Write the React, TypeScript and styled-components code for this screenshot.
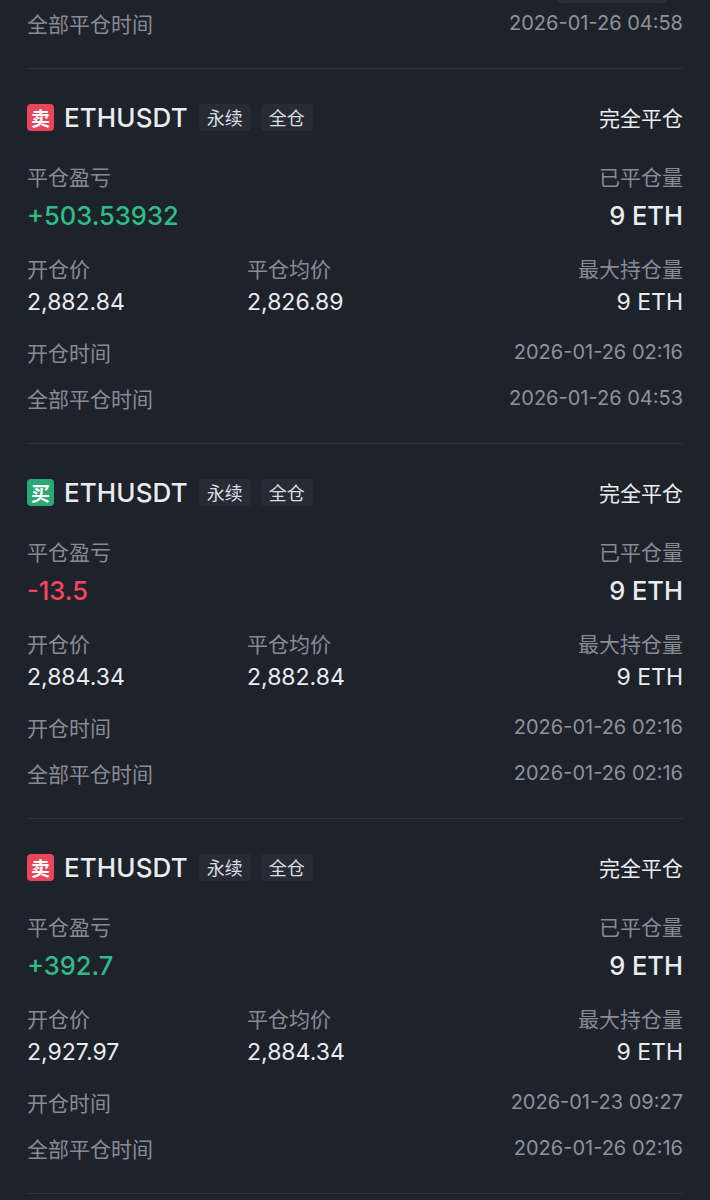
import styled, { createGlobalStyle } from "styled-components";

type Side = "buy" | "sell";

interface Position {
  side: Side;
  symbol: string;
  pnl: string;
  closedQty: string;
  openPrice: string;
  closePrice: string;
  maxQty: string;
  openTime: string;
  closeTime: string;
}

const POSITIONS: Position[] = [
  {
    side: "sell",
    symbol: "ETHUSDT",
    pnl: "+503.53932",
    closedQty: "9 ETH",
    openPrice: "2,882.84",
    closePrice: "2,826.89",
    maxQty: "9 ETH",
    openTime: "2026-01-26 02:16",
    closeTime: "2026-01-26 04:53",
  },
  {
    side: "buy",
    symbol: "ETHUSDT",
    pnl: "-13.5",
    closedQty: "9 ETH",
    openPrice: "2,884.34",
    closePrice: "2,882.84",
    maxQty: "9 ETH",
    openTime: "2026-01-26 02:16",
    closeTime: "2026-01-26 02:16",
  },
  {
    side: "sell",
    symbol: "ETHUSDT",
    pnl: "+392.7",
    closedQty: "9 ETH",
    openPrice: "2,927.97",
    closePrice: "2,884.34",
    maxQty: "9 ETH",
    openTime: "2026-01-23 09:27",
    closeTime: "2026-01-26 02:16",
  },
];

const GREEN = "#2ebd85";
const RED = "#f6465d";

const GlobalStyle = createGlobalStyle`
  body {
    margin: 0;
    background: #1e222a;
    font-family: Inter, "Noto Sans", "Noto Sans CJK SC", sans-serif;
    color: #eaecef;
  }
`;

const Page = styled.div`
  padding: 0 27px;
  min-height: 1200px;
`;

const TopStub = styled.div`
  height: 3px;
  overflow: hidden;
  display: flex;
  justify-content: flex-end;
  padding-right: 13px;
`;

const StubPill = styled.div`
  width: 113px;
  height: 20px;
  margin-top: -17px;
  border-radius: 0 0 12px 12px;
  background: #272c35;
  border: 1px solid #343a44;
`;

const Lead = styled.div`
  padding: 6px 0 31px;
  border-bottom: 1px solid #2e333c;
`;

const Card = styled.div`
  padding: 34px 0 31px;
  border-bottom: 1px solid #2e333c;
  display: flex;
  flex-direction: column;
`;

const Header = styled.div`
  display: flex;
  align-items: center;
  height: 28px;
`;

const SideBadge = styled.span<{ $side: Side }>`
  width: 27px;
  height: 27px;
  border-radius: 4px;
  background: ${(p) => (p.$side === "buy" ? "#2aa876" : "#e8475b")};
  color: #fff;
  font-family: "Noto Sans CJK SC", sans-serif;
  font-size: 19px;
  font-weight: 700;
  display: flex;
  align-items: center;
  justify-content: center;
  margin-right: 10px;
`;

const Symbol = styled.span`
  font-size: 26px;
  font-weight: 500;
  color: #eaecef;
  margin-right: 11px;
  letter-spacing: 0.1px;
`;

const Tag = styled.span`
  height: 27px;
  padding: 0 8px;
  border-radius: 4px;
  background: #272c34;
  color: #dadde2;
  font-family: "Noto Sans CJK SC", sans-serif;
  font-size: 18px;
  display: flex;
  align-items: center;
  margin-right: 10px;
`;

const Status = styled.span`
  margin-left: auto;
  font-family: "Noto Sans CJK SC", sans-serif;
  font-size: 21px;
  color: #eaecef;
`;

const Grid = styled.div<{ $gap: number; $top: number }>`
  display: grid;
  grid-template-columns: 220px 1fr auto;
  row-gap: ${(p) => p.$gap}px;
  margin-top: ${(p) => p.$top}px;
`;

const Label = styled.span<{ $right?: boolean }>`
  font-family: "Noto Sans CJK SC", sans-serif;
  font-size: 21px;
  line-height: 28px;
  color: #878b93;
  text-align: ${(p) => (p.$right ? "right" : "left")};
`;

const BigValue = styled.span<{ $color?: string; $right?: boolean }>`
  font-size: 25.5px;
  line-height: 34px;
  font-weight: 500;
  color: ${(p) => p.$color ?? "#eaecef"};
  text-align: ${(p) => (p.$right ? "right" : "left")};
`;

const Value = styled.span<{ $right?: boolean }>`
  font-size: 23px;
  line-height: 30px;
  color: #eaecef;
  text-align: ${(p) => (p.$right ? "right" : "left")};
`;

const TimeList = styled.div`
  display: flex;
  flex-direction: column;
  gap: 18px;
  margin-top: 21px;
`;

const TimeRow = styled.div`
  display: flex;
  justify-content: space-between;
  align-items: center;
  height: 28px;
`;

const TimeValue = styled.span`
  font-size: 20px;
  color: #8e9299;
`;

function PositionCard({ p }: { p: Position }) {
  const pnlColor = p.pnl.startsWith("-") ? RED : GREEN;
  return (
    <Card>
      <Header>
        <SideBadge $side={p.side}>{p.side === "buy" ? "买" : "卖"}</SideBadge>
        <Symbol>{p.symbol}</Symbol>
        <Tag>永续</Tag>
        <Tag>全仓</Tag>
        <Status>完全平仓</Status>
      </Header>

      <Grid $gap={9} $top={31}>
        <Label>平仓盈亏</Label>
        <span />
        <Label $right>已平仓量</Label>
        <BigValue $color={pnlColor}>{p.pnl}</BigValue>
        <span />
        <BigValue $right>{p.closedQty}</BigValue>
      </Grid>

      <Grid $gap={5} $top={21}>
        <Label>开仓价</Label>
        <Label>平仓均价</Label>
        <Label $right>最大持仓量</Label>
        <Value>{p.openPrice}</Value>
        <Value>{p.closePrice}</Value>
        <Value $right>{p.maxQty}</Value>
      </Grid>

      <TimeList>
        <TimeRow>
          <Label>开仓时间</Label>
          <TimeValue>{p.openTime}</TimeValue>
        </TimeRow>
        <TimeRow>
          <Label>全部平仓时间</Label>
          <TimeValue>{p.closeTime}</TimeValue>
        </TimeRow>
      </TimeList>
    </Card>
  );
}

export default function App() {
  return (
    <>
      <GlobalStyle />
      <Page>
        <TopStub>
          <StubPill />
        </TopStub>
        <Lead>
          <TimeRow>
            <Label>全部平仓时间</Label>
            <TimeValue>2026-01-26 04:58</TimeValue>
          </TimeRow>
        </Lead>
        {POSITIONS.map((p, i) => (
          <PositionCard key={i} p={p} />
        ))}
      </Page>
    </>
  );
}
